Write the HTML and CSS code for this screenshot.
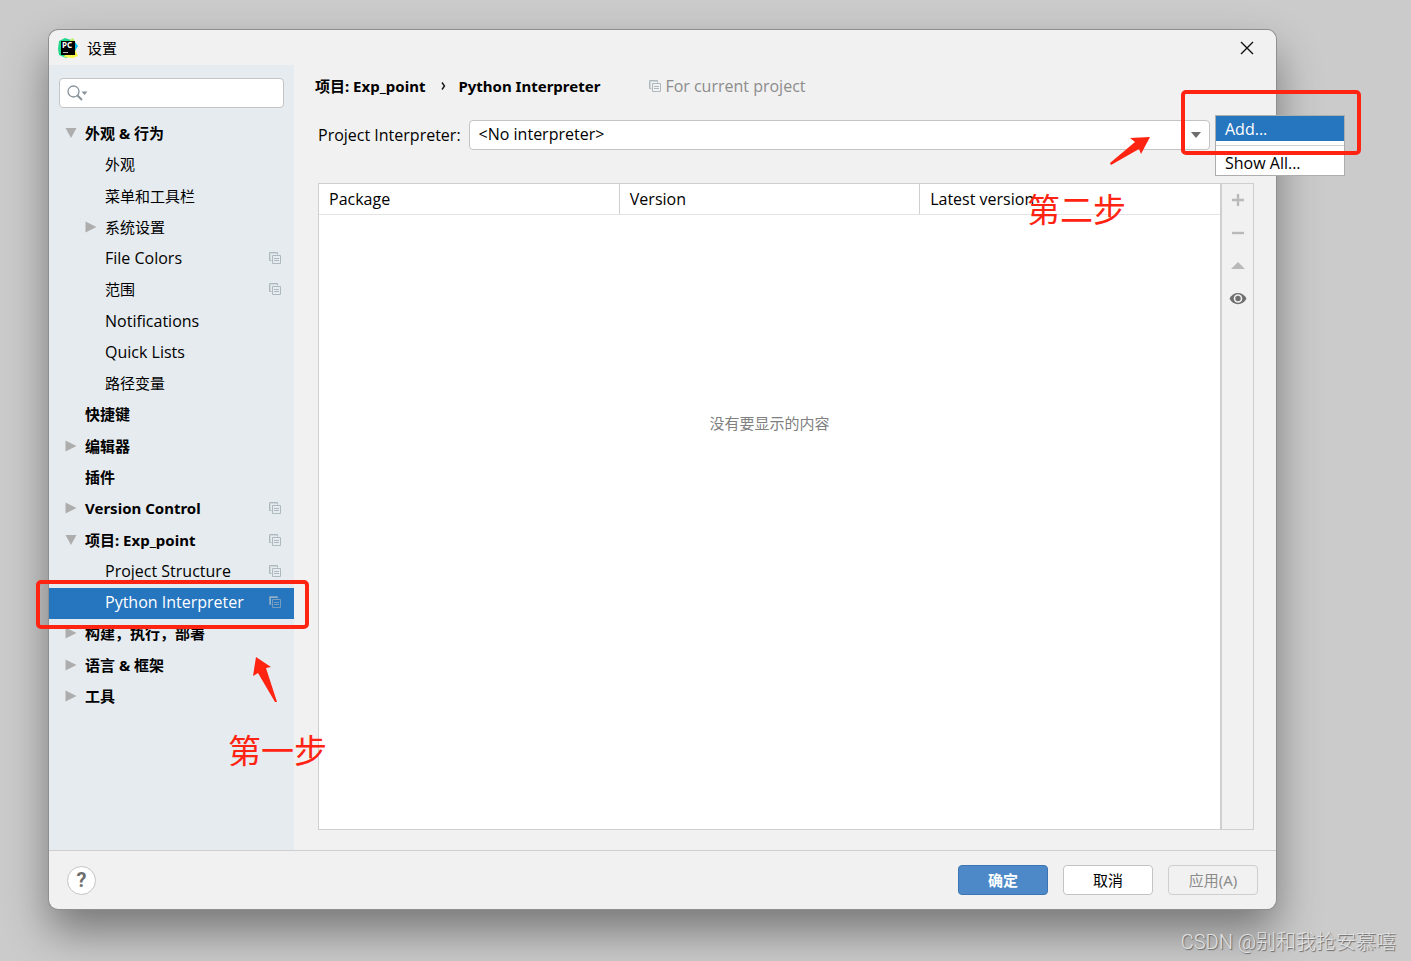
FILE: index.html
```html
<!DOCTYPE html>
<html lang="zh-CN">
<head>
  <meta charset="UTF-8" />
  <meta name="viewport" content="width=device-width, initial-scale=1.0"/>
  <title>设置</title>
  <link rel="stylesheet" href="styles.css">
</head>
<body>

  <!-- shared icons -->
  <svg class="sprite" aria-hidden="true">
    <symbol id="icon-copy" viewBox="0 0 12 12">
      <path d="M1 1h7v1H2v6H1z" fill="#cfd8dc"/>
      <path d="M.5 8.500V.5h8v2M.5 8.500h2" fill="none" stroke="#adb8bf"/>
      <path d="M3.500 3.500h8v8h-8z" fill="none" stroke="#adb8bf"/>
      <path d="M5 6.500h5M5 8.500h5" stroke="#adb8bf" fill="none"/>
    </symbol>
    <symbol id="icon-open" viewBox="0 0 12 12">
      <path d="M0.500 1h11L6 11z" fill="#adadad"/>
    </symbol>
    <symbol id="icon-closed" viewBox="0 0 12 12">
      <path d="M0.500 0.500v11L11.500 6z" fill="#adadad"/>
    </symbol>
  </svg>

  <div class="window">
    <header class="title-bar">
      <svg class="logo" viewBox="0 0 20 20" aria-hidden="true">
        <path d="M1 3L7 0l6 2 2 14-7 4-7-3-1-6z" fill="#21d789"/>
        <path d="M12 2l3-2 2 4 1 13-4 2-6-2z" fill="#b5ee5a"/>
        <path d="M14 5l3-1 3 4-3 5z" fill="#07c3f2"/>
        <path d="M16 9l4 9-5 2-9-1 2-4z" fill="#f4f64a"/>
        <path d="M3 3h14v14H3z" fill="#000"/>
        <path d="M5 14.500h5" stroke="#bbb"/>
        <text x="4" y="10" class="logo-text">PC</text>
      </svg>
      <span class="title">设置</span>
      <button class="close" aria-label="关闭">
        <svg viewBox="0 0 14 14" width="14" height="14"><path d="M1 1l12 12M13 1L1 13" stroke="#111" stroke-width="1.400" fill="none"/></svg>
      </button>
    </header>

    <div class="body">
      <aside class="sidebar">
        <label class="search">
          <svg viewBox="0 0 21 16" width="21" height="16" aria-hidden="true">
            <circle cx="6.500" cy="6.500" r="5.500" fill="none" stroke="#87929a" stroke-width="1.300"/>
            <path d="M10.500 10.500l4.500 4.500" stroke="#87929a" stroke-width="2"/>
            <path d="M14.500 6.500h6l-3 3.500z" fill="#87929a"/>
          </svg>
          <input type="text" aria-label="搜索">
        </label>

        <ul class="tree">
          <li class="group"><svg class="toggle"><use href="#icon-open"/></svg><a href="#">外观 &amp; 行为</a></li>
          <li class="child"><a href="#">外观</a></li>
          <li class="child"><a href="#">菜单和工具栏</a></li>
          <li class="child"><svg class="toggle"><use href="#icon-closed"/></svg><a href="#">系统设置</a></li>
          <li class="child"><a href="#" lang="en">File Colors</a><svg class="copy"><use href="#icon-copy"/></svg></li>
          <li class="child"><a href="#">范围</a><svg class="copy"><use href="#icon-copy"/></svg></li>
          <li class="child"><a href="#" lang="en">Notifications</a></li>
          <li class="child"><a href="#" lang="en">Quick Lists</a></li>
          <li class="child"><a href="#">路径变量</a></li>
          <li class="group"><a href="#">快捷键</a></li>
          <li class="group"><svg class="toggle"><use href="#icon-closed"/></svg><a href="#">编辑器</a></li>
          <li class="group"><a href="#">插件</a></li>
          <li class="group"><svg class="toggle"><use href="#icon-closed"/></svg><a href="#">Version Control</a><svg class="copy"><use href="#icon-copy"/></svg></li>
          <li class="group"><svg class="toggle"><use href="#icon-open"/></svg><a href="#">项目: Exp_point</a><svg class="copy"><use href="#icon-copy"/></svg></li>
          <li class="child"><a href="#" lang="en">Project Structure</a><svg class="copy"><use href="#icon-copy"/></svg></li>
          <li class="child selected">
            <a href="#" lang="en">Python Interpreter</a><svg class="copy"><use href="#icon-copy"/></svg>
            <div class="mark mark-one"></div>
            <svg class="arrow arrow-one" viewBox="0 0 24 46"><path d="M3 0L18 10 13 11 24 45 22 45 5 16 0 19z" fill="#ff2312"/></svg>
            <span class="step step-one">第一步</span>
          </li>
          <li class="group"><svg class="toggle"><use href="#icon-closed"/></svg><a href="#">构建，执行，部署</a></li>
          <li class="group"><svg class="toggle"><use href="#icon-closed"/></svg><a href="#">语言 &amp; 框架</a></li>
          <li class="group"><svg class="toggle"><use href="#icon-closed"/></svg><a href="#">工具</a></li>
        </ul>
      </aside>

      <main class="content">
        <div class="breadcrumb">
          <b>项目: Exp_point</b>
          <svg class="chevron" viewBox="0 0 5 8"><path d="M1 0.500L3.500 4 1 7.500" fill="none" stroke="#111" stroke-width="1.400"/></svg>
          <b>Python Interpreter</b>
          <span class="scope" lang="en"><svg class="copy"><use href="#icon-copy"/></svg>For current project</span>
        </div>

        <div class="interpreter">
          <label for="interpreter" lang="en">Project Interpreter:</label>
          <div class="select">
            <select id="interpreter" lang="en"><option>&lt;No interpreter&gt;</option></select>
            <svg viewBox="0 0 10 6" width="10" height="6" aria-hidden="true"><path d="M0 0h10L5 6z" fill="#6e6e6e"/></svg>
          </div>
          <div class="menu">
            <button class="active" lang="en">Add...</button>
            <hr>
            <button lang="en">Show All...</button>
          </div>
          <div class="mark mark-two"></div>
          <svg class="arrow arrow-two" viewBox="0 0 40 28"><path d="M40 0L31 17 29 12 1 28 0 26 25 5 20 1z" fill="#ff2312"/></svg>
          <span class="step step-two">第二步</span>
        </div>

        <div class="packages">
          <table>
            <thead>
              <tr><th lang="en">Package</th><th lang="en">Version</th><th lang="en">Latest version</th></tr>
            </thead>
            <tbody>
              <tr><td colspan="3">没有要显示的内容</td></tr>
            </tbody>
          </table>
          <div class="tools">
            <button aria-label="添加"><svg viewBox="0 0 18 14"><path d="M9 1v12M3 7h12" stroke="#b9b9b9" stroke-width="2.400"/></svg></button>
            <button aria-label="移除"><svg viewBox="0 0 18 14"><path d="M3 7h12" stroke="#b9b9b9" stroke-width="2.400"/></svg></button>
            <button aria-label="升级"><svg viewBox="0 0 18 14"><path d="M2 10h14L9 3z" fill="#b9b9b9"/></svg></button>
            <button aria-label="显示"><svg viewBox="0 0 18 14"><path d="M0.500 6.500C4-1 14-1 17.500 6.500 14 14 4 14 .5 6.500z" fill="#6e6e6e"/><circle cx="9" cy="6.500" r="4.300" fill="#f1f1f1"/><circle cx="9" cy="6.500" r="2.700" fill="#6e6e6e"/></svg></button>
          </div>
        </div>
      </main>
    </div>

    <footer class="actions">
      <button class="help" aria-label="帮助">?</button>
      <button class="button primary">确定</button>
      <button class="button">取消</button>
      <button class="button" disabled>应用(A)</button>
    </footer>
  </div>

  <div class="watermark">CSDN @别和我抢安慕嘻</div>

</body>
</html>
```
FILE: styles.css
```css
* {
  margin: 0;
  padding: 0;
  box-sizing: border-box;
}

body {
  font-family: 'Noto Sans', 'Noto Sans CJK SC', sans-serif;
  font-size: 15px;
  line-height: 20px;
  color: #000;
  background: #cbcbcb;
  min-height: 100vh;
  display: flex;
  padding: 30px 135px 52px 49px;
  position: relative;
  overflow: hidden;
}

button,
input,
select {
  font: inherit;
  color: inherit;
}

[lang="en"] {
  font-family: 'Open Sans', sans-serif;
  font-size: 16px;
}

a {
  color: inherit;
  text-decoration: none;
}

.sprite {
  position: absolute;
  width: 0;
  height: 0;
}

.window {
  flex: 1;
  display: flex;
  flex-direction: column;
  background: #f1f1f1;
  border-radius: 9px;
  box-shadow: 0 0 0 1px #8f8f8f, 0 22px 44px rgba(0, 0, 0, 0.42);
}

/* title bar */
.title-bar {
  display: flex;
  align-items: center;
  height: 35px;
  padding: 0 20px 0 9px;
}

.logo {
  width: 20px;
  height: 20px;
}

.logo-text {
  font-size: 8px;
  font-weight: bold;
  fill: #fff;
}

.title {
  flex: 1;
  margin-left: 9px;
}

.close {
  display: flex;
  padding: 2px;
  border: none;
  background: none;
}

.body {
  flex: 1;
  display: flex;
}

/* sidebar */
.sidebar {
  width: 245px;
  padding-top: 13px;
  background: #e6ebef;
}

.search {
  display: flex;
  align-items: center;
  height: 30px;
  margin: 0 10px;
  padding-left: 7px;
  background: #fff;
  border: 1px solid #c4c4c4;
  border-radius: 4px;
}

.search input {
  flex: 1;
  min-width: 0;
  height: 26px;
  padding: 0 4px;
  border: none;
  outline: none;
  background: none;
}

.tree {
  display: grid;
  grid-auto-rows: 1fr;
  min-height: 594px;
  margin-top: 11px;
  list-style: none;
}

.tree li {
  display: flex;
  align-items: center;
  position: relative;
  padding: 0 13px 3px 36px;
}

.tree .child {
  padding-left: 56px;
}

.tree .group {
  font-weight: bold;
}

.tree a {
  flex: 1;
}

.toggle {
  width: 12px;
  height: 12px;
  margin-left: -20px;
  margin-right: 8px;
}

.copy {
  width: 12px;
  height: 12px;
}

.tree .selected {
  background: #2675bf;
  color: #fff;
}

.selected .copy {
  opacity: 0.6;
}

/* content */
.content {
  flex: 1;
  display: flex;
  flex-direction: column;
  padding: 11px 22px 20px 24px;
}

.breadcrumb {
  display: flex;
  align-items: center;
  margin-left: -3px;
}

.chevron {
  width: 5px;
  height: 8px;
  margin: 0 12px 0 16px;
}

.scope {
  display: flex;
  align-items: center;
  gap: 4px;
  margin-left: 49px;
  color: #8c8c8c;
}

.interpreter {
  display: flex;
  align-items: center;
  gap: 8px;
  position: relative;
  margin: 24px 44px 33px 0;
}

.select {
  flex: 1;
  display: flex;
  align-items: center;
  position: relative;
}

.select select {
  flex: 1;
  appearance: none;
  height: 30px;
  padding: 0 30px 2px 9px;
  background: #fff;
  border: 1px solid #c4c4c4;
  border-radius: 4px;
}

.select svg {
  position: absolute;
  right: 9px;
}

.menu {
  position: absolute;
  z-index: 1;
  top: -5px;
  left: calc(100% + 5px);
  width: 130px;
  background: #fff;
  border: 1px solid #adadad;
}

.menu button {
  display: block;
  width: 100%;
  height: 25px;
  padding: 0 9px;
  border: none;
  background: none;
  text-align: left;
}

.menu .active {
  background: #2675bf;
  color: #fff;
}

.menu hr {
  margin: 4px 0;
  border: none;
  border-top: 1px solid #d1d1d1;
}

.packages {
  flex: 1;
  display: flex;
  border: 1px solid #cfcfcf;
}

.packages table {
  flex: 1;
  width: 100%;
  table-layout: fixed;
  border-collapse: collapse;
  background: #fff;
}

.packages th {
  height: 30px;
  padding: 0 10px;
  font-weight: normal;
  text-align: left;
  border-bottom: 1px solid #e4e4e4;
}

.packages th + th {
  border-left: 1px solid #cfcfcf;
}

.packages td {
  padding-top: 198px;
  vertical-align: top;
  text-align: center;
  color: #808080;
}

.tools {
  display: flex;
  flex-direction: column;
  align-items: center;
  gap: 13px;
  width: 33px;
  padding-top: 6px;
  border-left: 2px solid #cfcfcf;
}

.tools button {
  display: flex;
  align-items: center;
  height: 20px;
  border: none;
  background: none;
}

.tools svg {
  width: 18px;
  height: 14px;
}

/* footer */
.actions {
  display: flex;
  align-items: center;
  gap: 15px;
  height: 59px;
  padding: 0 18px;
  border-top: 1px solid #cfcfcf;
}

.help {
  width: 29px;
  height: 29px;
  margin-right: auto;
  border: 1px solid #c4c4c4;
  border-radius: 50%;
  background: #fff;
  color: #6e6e6e;
  font-family: Roboto, sans-serif;
  font-size: 20px;
  font-weight: bold;
}

.button {
  width: 90px;
  height: 30px;
  border: 1px solid #c4c4c4;
  border-radius: 4px;
  background: #fff;
}

.button.primary {
  background: #4d89c9;
  border-color: #3d75b2;
  color: #fff;
  font-weight: bold;
}

.button:disabled {
  background: none;
  border-color: #cfcfcf;
  color: #8c8c8c;
}

/* step marks drawn over the window */
.mark {
  position: absolute;
  z-index: 2;
  border: 4px solid #ff2312;
  border-radius: 5px;
}

.mark-one {
  top: -8px;
  left: -13px;
  right: -15px;
  height: 49px;
}

.mark-two {
  top: -30px;
  left: calc(100% - 29px);
  width: 180px;
  height: 65px;
}

.arrow {
  position: absolute;
  z-index: 2;
}

.arrow-one {
  top: 69px;
  left: 204px;
  width: 24px;
  height: 46px;
}

.arrow-two {
  top: 17px;
  right: 60px;
  width: 40px;
  height: 28px;
}

.step {
  position: absolute;
  z-index: 2;
  color: #ff2312;
  font-size: 33px;
  line-height: 40px;
  white-space: nowrap;
}

.step-one {
  top: 143px;
  left: 179px;
}

.step-two {
  top: 70px;
  right: 84px;
}

.watermark {
  position: absolute;
  right: 15px;
  bottom: 6px;
  font-family: Roboto, 'Noto Sans CJK SC', sans-serif;
  font-size: 20px;
  line-height: 26px;
  font-weight: 300;
  color: #e2e2e2;
  text-shadow: 1px 1px 1px #666;
}
```
